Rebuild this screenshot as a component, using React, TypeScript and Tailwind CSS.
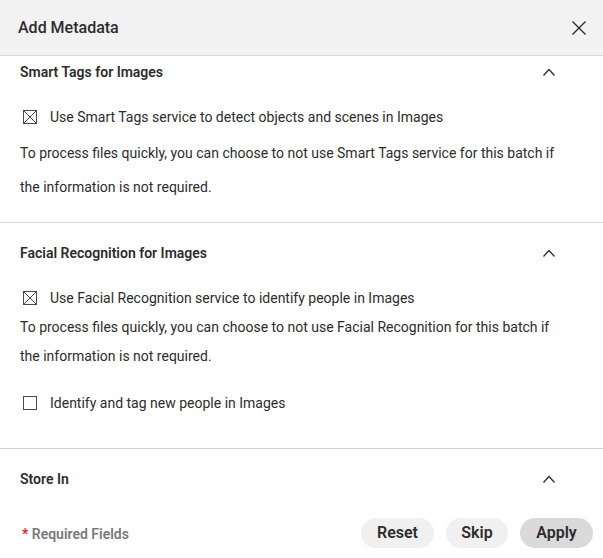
import React from "react";

const Chevron = () => (
  <svg width="14" height="10" viewBox="0 0 14 10" fill="none" className="mr-[47px]">
    <path d="M1.5 8.5 L7 2.5 L12.5 8.5" stroke="#2c2c2c" strokeWidth="1.3" />
  </svg>
);

const Box = ({ checked }: { checked?: boolean }) => (
  <svg width="14" height="14" viewBox="0 0 14 14" fill="none" className="ml-[23px] mr-[13px] shrink-0">
    <rect x="0.5" y="0.5" width="13" height="13" stroke="#4b4b4b" strokeWidth="1" />
    {checked && <path d="M1 1 L13 13 M13 1 L1 13" stroke="#4b4b4b" strokeWidth="1" />}
  </svg>
);

const Title = ({ children }: { children: React.ReactNode }) => (
  <div className="flex h-[32px] items-center justify-between">
    <span className="ml-[20px] text-[14px] font-semibold text-[#2c2c2c]">{children}</span>
    <Chevron />
  </div>
);

export default function App() {
  return (
    <div
      className="flex h-[558px] w-[603px] flex-col bg-white text-[#2c2c2c]"
      style={{ fontFamily: "Roboto, 'Liberation Sans', sans-serif" }}
    >
      <div className="flex h-[56px] shrink-0 items-center justify-between border-b border-[#d9d9d9] bg-[#f2f2f2]">
        <span className="ml-[18px] text-[16px] font-medium text-[#2c2c2c]">Add Metadata</span>
        <svg width="16" height="16" viewBox="0 0 16 16" fill="none" className="mr-[16px]">
          <path d="M1.5 1.5 L14.5 14.5 M14.5 1.5 L1.5 14.5" stroke="#2c2c2c" strokeWidth="1.4" />
        </svg>
      </div>

      <div className="border-b border-[#d5d5d5] pb-[18px]">
        <Title>Smart Tags for Images</Title>
        <div className="mt-[19px] flex h-[20px] items-center">
          <Box checked />
          <span className="text-[14px]">Use Smart Tags service to detect objects and scenes in Images</span>
        </div>
        <p className="ml-[20px] mt-[9px] w-[545px] text-[14px] leading-[34px]">
          To process files quickly, you can choose to not use Smart Tags service for this batch if the information is not required.
        </p>
      </div>

      <div className="border-b border-[#d5d5d5] pb-[35px] pt-[14px]">
        <Title>Facial Recognition for Images</Title>
        <div className="mt-[19px] flex h-[20px] items-center">
          <Box checked />
          <span className="text-[14px]">Use Facial Recognition service to identify people in Images</span>
        </div>
        <p className="ml-[20px] mt-[5px] w-[545px] text-[14px] leading-[29px]">
          To process files quickly, you can choose to not use Facial Recognition for this batch if the information is not required.
        </p>
        <div className="mt-[22px] flex h-[20px] items-center">
          <Box />
          <span className="text-[14px]">Identify and tag new people in Images</span>
        </div>
      </div>

      <div className="pt-[14px]">
        <Title>Store In</Title>
      </div>

      <div className="mt-[23px] flex items-center justify-between">
        <span className="ml-[22px] mt-[3px] text-[14px] font-semibold text-[#7a7a7a]">
          <span className="text-[#e0212b]">*</span> Required Fields
        </span>
        <div className="mr-[10px] flex gap-[12px]">
          <button className="h-[30px] w-[73px] rounded-full bg-[#f0f0f0] text-[16px] font-semibold text-[#2c2c2c]">Reset</button>
          <button className="h-[30px] w-[62px] rounded-full bg-[#f0f0f0] text-[16px] font-semibold text-[#2c2c2c]">Skip</button>
          <button className="h-[30px] w-[73px] rounded-full bg-[#dadada] text-[16px] font-semibold text-[#2c2c2c]">Apply</button>
        </div>
      </div>
    </div>
  );
}
